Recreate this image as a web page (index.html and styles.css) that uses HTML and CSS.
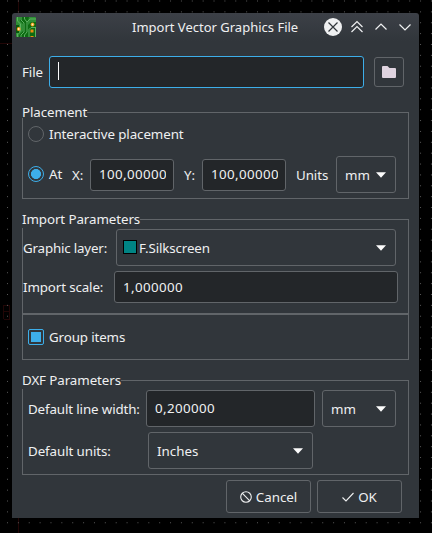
FILE: index.html
```
<!DOCTYPE html>
<html lang="en">
<head>
<meta charset="utf-8">
<title>Import Vector Graphics File</title>
<link rel="stylesheet" href="styles.css">
</head>
<body>
<svg class="canvas" width="432" height="533" shape-rendering="crispEdges">
  <defs>
    <pattern id="dots" x="7" y="0.5" width="10.87" height="10.87" patternUnits="userSpaceOnUse">
      <rect width="1" height="1" fill="#5a5a5a"/>
    </pattern>
  </defs>
  <rect width="432" height="533" fill="#000"/>
  <path d="M18.5 0v533M0 43.5h12" stroke="#210606"/>
  <path d="M3.5 305v14M3.5 305.500h6v6h-6M9.500 312v7M3.500 319.500h6" stroke="#210606" fill="none"/>
  <rect width="432" height="533" fill="url(#dots)"/>
</svg>
<main class="dialog">
  <header class="titlebar">
    <svg class="app-icon" width="20" height="20" viewBox="0 0 20 20">
      <rect width="20" height="20" rx="1.500" fill="#0d6b12"/>
      <path d="M0 1q0-1 1-1h3v4l3 3v7l-4 4v2H1q-1 0-1-1zM13 0h6q1 0 1 1v4h-5l-3 3V4z" fill="#2f8f35"/>
      <g fill="none" stroke="#5bb060" stroke-width="1">
        <path d="M1.500 0v4l3 3v7l-3 3v3M5 0v3l3 3v9l-3 3v2M8.500 0v2l2.500 3v10l-2.500 3v2M20 2h-6l-3 3M20 10.500h-5l-2 2V20M19.500 11v9"/>
      </g>
      <path d="M0 8h3v8H0z" fill="#07590c"/>
      <circle cx="2.700" cy="12" r="1.900" fill="#f19a1c"/><circle cx="2.700" cy="12" r=".9" fill="#fff2c0"/>
      <circle cx="16.500" cy="7.500" r="1.900" fill="#f19a1c"/><circle cx="16.500" cy="7.500" r=".9" fill="#fff2c0"/>
      <path d="M14.500 12.500h3v3h-3zM14.500 19h3v1h-3z" fill="#ee8d12"/>
    </svg>
    <h1>Import Vector Graphics File</h1>
    <svg class="window-buttons" width="90" height="20" viewBox="0 0 90 20" fill="none" stroke="#eff0f1" stroke-width="1.200">
      <circle cx="9" cy="10" r="9" fill="#eff0f1" stroke="none"/>
      <path d="M4.500 5.500l9 9M13.500 5.500l-9 9" stroke="#31363b"/>
      <path d="M27.500 10l5.500-5.500 5.500 5.500M27.500 15l5.500-5.500 5.500 5.500M51.500 12.500l5.500-5.500 5.500 5.500M75.500 7.500l5.500 5.500 5.500-5.500"/>
    </svg>
  </header>

  <section class="file-row">
    <span class="file-label">File</span>
    <div class="field file-field"><i class="caret"></i></div>
    <div class="button browse">
      <svg width="14" height="12" viewBox="0 0 14 12"><path d="M0 1q0-1 1-1h4.500l2 2H13q1 0 1 1v8q0 1-1 1H1q-1 0-1-1z" fill="#dfd3df"/></svg>
    </div>
  </section>

  <section class="group placement">
    <h2>Placement</h2>
    <div class="row interactive"><i class="radio"></i><span>Interactive placement</span></div>
    <div class="row at-row">
      <i class="radio on"></i><span class="at">At</span>
      <span class="x">X:</span><div class="field coord"><span>100,00000</span></div>
      <span class="y">Y:</span><div class="field coord"><span>100,00000</span></div>
      <span class="units">Units</span><div class="select unit"><span>mm</span><svg class="arrow" width="10" height="6" viewBox="0 0 10 6"><path d="M0 .3h10L5 5.700z"/></svg></div>
    </div>
  </section>

  <section class="group import">
    <h2>Import Parameters</h2>
    <div class="row layer-row">
      <span class="layer-label">Graphic layer:</span>
      <div class="select layer"><i class="swatch"></i><span>F.Silkscreen</span><svg class="arrow" width="10" height="6" viewBox="0 0 10 6"><path d="M0 .3h10L5 5.700z"/></svg></div>
    </div>
    <div class="row scale-row"><span class="scale-label">Import scale:</span><div class="field scale"><span>1,000000</span></div></div>
  </section>
  <section class="group items">
    <i class="check"></i><span>Group items</span>
  </section>

  <section class="group dxf">
    <h2>DXF Parameters</h2>
    <div class="row width-row">
      <span class="dxf-label">Default line width:</span>
      <div class="field width"><span>0,200000</span></div>
      <div class="select width-unit"><span>mm</span><svg class="arrow" width="10" height="6" viewBox="0 0 10 6"><path d="M0 .3h10L5 5.700z"/></svg></div>
    </div>
    <div class="row units-row">
      <span class="dxf-label">Default units:</span>
      <div class="select inches"><span>Inches</span><svg class="arrow" width="10" height="6" viewBox="0 0 10 6"><path d="M0 .3h10L5 5.700z"/></svg></div>
    </div>
  </section>

  <footer class="actions">
    <div class="button action">
      <svg width="12" height="12" viewBox="0 0 12 12" fill="none" stroke="#eff0f1" stroke-width="1.100"><circle cx="6" cy="6" r="5.300"/><path d="M2.200 2.200l7.600 7.600"/></svg>
      <span>Cancel</span>
    </div>
    <div class="button action">
      <svg width="12" height="12" viewBox="0 0 12 12" fill="none" stroke="#eff0f1" stroke-width="1.100"><path d="M.5 6.500l3.500 3.500L11.500 2"/></svg>
      <span>OK</span>
    </div>
  </footer>
</main>
</body>
</html>
```
FILE: styles.css
```
* { box-sizing: border-box; }
body {
  margin: 0;
  width: 432px;
  height: 533px;
  overflow: hidden;
  background: #000;
  color: #eff0f1;
  font: 13.33px/18px "Noto Sans", sans-serif;
  letter-spacing: -0.08px;
  padding: 13px 13px 15px 12px;
  white-space: nowrap;
}
.canvas { position: absolute; left: 0; top: 0; z-index: -1; }
svg { flex: none; display: block; }
h1, h2 { margin: 0; font-size: inherit; font-weight: 400; }
.dialog {
  width: 407px;
  height: 505px;
  padding: 0 10px;
  border-radius: 3px 3px 0 0;
  background: linear-gradient(#3c4047, #31363b 28px);
}
.titlebar { display: flex; height: 43px; margin: 0 -10px; padding-left: 4px; }
.app-icon { margin-top: 4px; }
.titlebar h1 { width: 287px; margin-left: 9px; margin-top: 5px; padding-left: 87px; font-size: 13px; letter-spacing: 0; }
.window-buttons { margin: 4px 0 0 -8px; }

.field, .select, .button {
  display: flex;
  align-items: center;
  flex: none;
  border: 1px solid #616569;
  border-radius: 3px;
}
.field { height: 32px; background: #232629; padding: 0 8px 1px; letter-spacing: 0.37px; }
.select { height: 37px; padding: 0 9px 0 8px; }
.arrow { margin-left: auto; fill: #fcfcfc; }

.file-row { display: flex; align-items: center; height: 32px; }
.file-label { width: 27px; }
.file-field { width: 315px; border-color: #3daee9; }
.caret { width: 1px; height: 18px; background: #fcfcfc; margin-top: -1px; }
.browse { width: 30px; height: 30px; margin-left: 10px; justify-content: center; }

.group { width: 387px; border: 1px solid #616569; }
.group h2 {
  width: max-content;
  height: 18px;
  margin: -10px 0 0 -1px;
  background: #31363b;
}
.row { display: flex; align-items: center; }

.placement { height: 87px; margin-top: 24px; }
.placement h2 { height: 15px; }
.radio {
  flex: none;
  display: block;
  width: 16px;
  height: 16px;
  border: 1px solid #616569;
  border-radius: 50%;
}
.radio.on { margin-top: -1px; border-color: #3daee9; background: radial-gradient(circle, #3daee9 4.700px, transparent 5.300px); }
.interactive { padding-left: 5px; gap: 5px; height: 18px; margin-top: 7px; }
.at-row { padding-left: 5px; height: 37px; margin-top: 13px; }
.at { width: 23px; margin: -2px 0 0 5px; }
.x { width: 18px; }
.coord { width: 84px; }
.coord span { width: 67px; flex: none; overflow: hidden; }
.y { width: 18px; margin-left: 10px; }
.units { width: 40px; margin-left: 10px; }
.unit { width: 60px; }

.import { height: 95px; margin-top: 20px; }
.layer-row { height: 37px; margin-top: 1px; }
.layer-label { width: 93px; letter-spacing: -0.17px; }
.layer { width: 280px; padding-left: 6px; letter-spacing: -0.12px; }
.swatch { width: 14px; height: 14px; background: #008484; border: 1px solid #000; margin: -2px 2px 0 0; }
.scale-row { height: 32px; margin-top: 5px; }
.scale-label { width: 91px; letter-spacing: -0.12px; }
.scale { width: 284px; }

.items { height: 46px; display: flex; align-items: center; padding-left: 5px; gap: 5px; }
.check {
  width: 16px;
  height: 16px;
  border: 1px solid #3daee9;
  border-radius: 2px;
  padding: 2px;
  background: #3daee9 content-box;
}
.items span { letter-spacing: -0.12px; }

.dxf { height: 95px; margin-top: 20px; }
.width-row { height: 37px; margin-top: 1px; padding-left: 5px; }
.width-row .dxf-label { width: 118px; letter-spacing: -0.12px; }
.width { width: 169px; height: 37px; }
.width-unit { width: 74px; margin-left: 7px; }
.units-row { height: 37px; margin-top: 5px; padding-left: 5px; }
.units-row .dxf-label { width: 120px; }
.inches { width: 165px; letter-spacing: 0; }

.actions { display: flex; justify-content: flex-end; gap: 6px; padding-right: 7px; margin-top: 5px; }
.action { width: 85px; height: 33px; justify-content: center; gap: 4px; letter-spacing: 0; }
```
